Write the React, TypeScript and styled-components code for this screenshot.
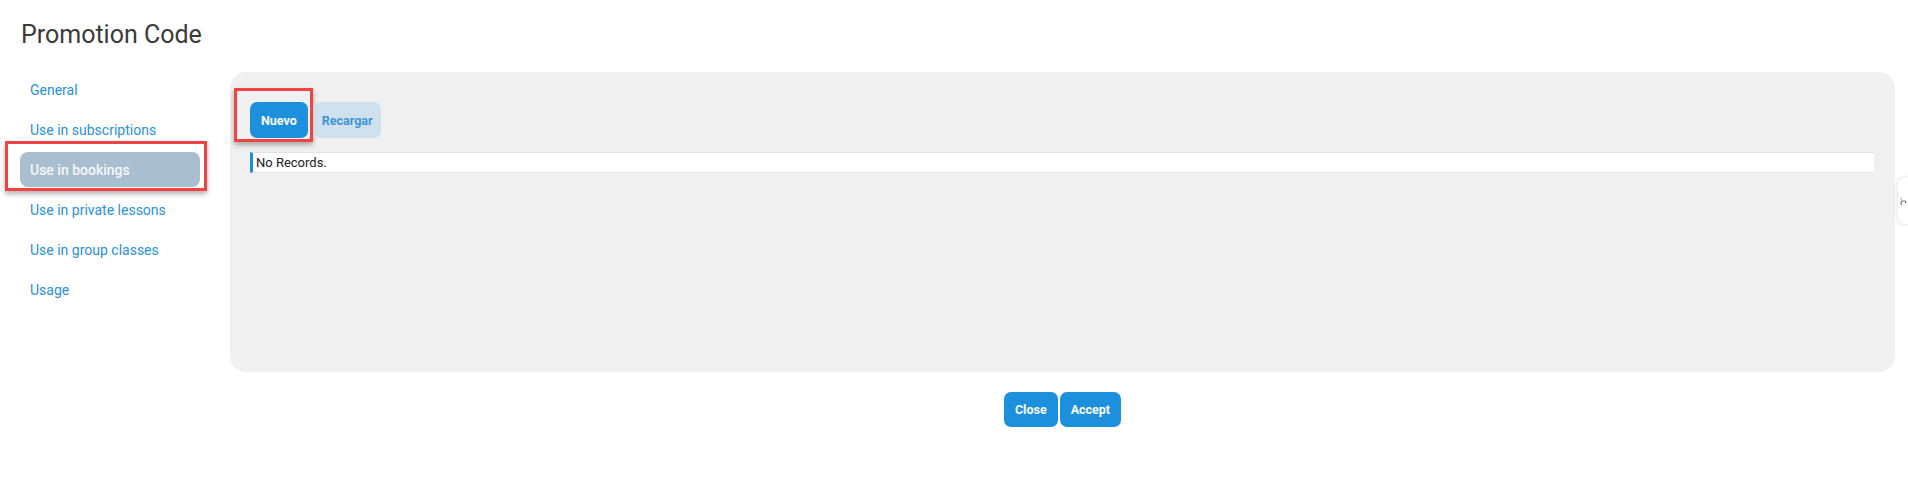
import React, { useState } from 'react'
import styled, { createGlobalStyle } from 'styled-components'

const GlobalStyle = createGlobalStyle`
    html, body {
        margin: 0;
        padding: 0;
        background: #ffffff;
    }
    body {
        font-family: Roboto, 'Liberation Sans', Arial, sans-serif;
        color: #333;
    }
`

const Page = styled.div`
    position: relative;
    width: 1908px;
    height: 484px;
    overflow: hidden;
`

const Title = styled.h1`
    margin: 0;
    padding: 20px 0 0 21px;
    height: 72px;
    box-sizing: border-box;
    font-size: 25px;
    font-weight: 400;
    line-height: 30px;
    color: #3b3b3b;
`

const Body = styled.div`
    display: flex;
    align-items: flex-start;
`

const SideMenu = styled.nav`
    width: 230px;
    flex: none;
    padding: 0 0 0 20px;
    box-sizing: border-box;
    display: flex;
    flex-direction: column;
    gap: 5px;
`

const MenuItem = styled.div<{ $selected?: boolean }>`
    position: relative;
    width: 180px;
    height: 35px;
    padding-left: 10px;
    box-sizing: border-box;
    display: flex;
    align-items: center;
    border-radius: 8px;
    font-size: 14px;
    cursor: pointer;
    color: ${p => (p.$selected ? '#f4f7fa' : '#2b90dd')};
    background: ${p => (p.$selected ? '#a9bfcf' : 'transparent')};
    font-weight: ${p => (p.$selected ? 500 : 400)};
`

const Highlight = styled.span<{ $t: number; $r: number; $b: number; $l: number }>`
    position: absolute;
    top: ${p => -p.$t}px;
    right: ${p => -p.$r}px;
    bottom: ${p => -p.$b}px;
    left: ${p => -p.$l}px;
    border: 3px solid #ee4444;
    box-shadow: 0 3px 5px rgba(0, 0, 0, 0.3);
    pointer-events: none;
`

const Content = styled.div`
    flex: 1;
    margin-right: 13px;
    display: flex;
    flex-direction: column;
    align-items: center;
`

const Panel = styled.section`
    align-self: stretch;
    height: 300px;
    box-sizing: border-box;
    padding: 30px 21px 0 20px;
    background: #f0f0f0;
    border-radius: 16px;
`

const Toolbar = styled.div`
    display: flex;
    gap: 6px;
    margin-bottom: 14px;
`

const Button = styled.button<{ $variant?: 'primary' | 'light' }>`
    position: relative;
    height: 36px;
    padding: 0 ${p => (p.$variant === 'light' ? 8 : 11)}px;
    border: none;
    border-radius: 7px;
    font-family: inherit;
    font-size: 12.5px;
    font-weight: 700;
    cursor: pointer;
    background: ${p => (p.$variant === 'light' ? '#d0e1ee' : '#1c8fdd')};
    color: ${p => (p.$variant === 'light' ? '#3d95d8' : '#ffffff')};
`

const RecordsRow = styled.div`
    height: 21px;
    box-sizing: border-box;
    background: #ffffff;
    border-top: 1px solid #e2e2e2;
    border-bottom: 1px solid #e2e2e2;
    border-left: 3px solid #1c8fdd;
    padding-left: 3px;
    display: flex;
    align-items: center;
    font-size: 13px;
    color: #222;
`

const Footer = styled.div`
    display: flex;
    gap: 2px;
    margin-top: 20px;
`

const FooterButton = styled(Button)`
    height: 35px;
    padding: 0 11px;
`

const SideTab = styled.div`
    position: absolute;
    top: 178px;
    right: 0;
    width: 10px;
    height: 46px;
    background: #ffffff;
    border-radius: 6px 0 0 6px;
    box-shadow: 0 0 4px rgba(0, 0, 0, 0.18);
    display: flex;
    align-items: center;
    padding-left: 2px;
    box-sizing: border-box;
    overflow: hidden;
`

const menu = [
    'General',
    'Use in subscriptions',
    'Use in bookings',
    'Use in private lessons',
    'Use in group classes',
    'Usage',
]

export default function App(): React.ReactElement {
    const [current, setCurrent] = useState('Use in bookings')

    return (
        <Page>
            <GlobalStyle />
            <Title>Promotion Code</Title>
            <Body>
                <SideMenu>
                    {menu.map(item => (
                        <MenuItem key={item} $selected={item === current} onClick={() => setCurrent(item)}>
                            {item}
                            {item === current && <Highlight $t={11} $r={7} $b={4} $l={15} />}
                        </MenuItem>
                    ))}
                </SideMenu>
                <Content>
                    <Panel>
                        <Toolbar>
                            <Button>
                                Nuevo
                                <Highlight $t={14} $r={5} $b={4} $l={16} />
                            </Button>
                            <Button $variant="light">Recargar</Button>
                        </Toolbar>
                        <RecordsRow>No Records.</RecordsRow>
                    </Panel>
                    <Footer>
                        <FooterButton>Close</FooterButton>
                        <FooterButton>Accept</FooterButton>
                    </Footer>
                </Content>
            </Body>
            <SideTab>
                <svg width="14" height="16" viewBox="0 0 14 16">
                    <circle cx="2" cy="3" r="1" fill="#8a8a8a" />
                    <circle cx="2" cy="6" r="1" fill="#8a8a8a" />
                    <path d="M2 15 V10 Q2 8 4.5 8 H8 Q10 8 10 10 V12" stroke="#6e6e6e" strokeWidth="2" fill="none" />
                </svg>
            </SideTab>
        </Page>
    )
}
